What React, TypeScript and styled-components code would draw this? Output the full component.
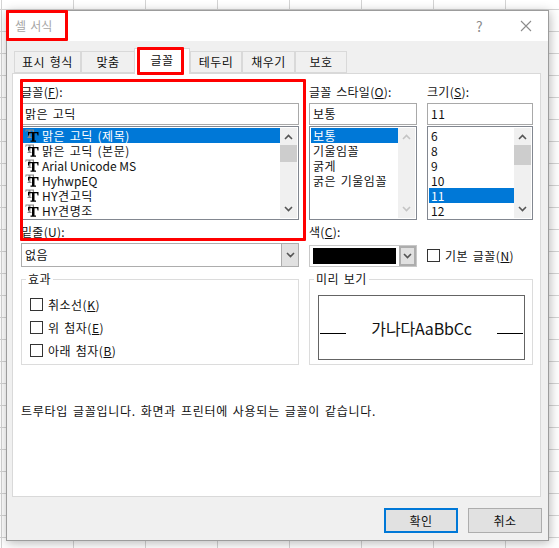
import styled, { createGlobalStyle } from 'styled-components'
import { ReactNode } from 'react'

const GlobalStyle = createGlobalStyle`
  html, body {
    margin: 0;
    padding: 0;
    background: #fff;
    font: 12px/16px 'Noto Sans CJK KR', 'Noto Sans', sans-serif;
    letter-spacing: 0.5px;
    word-spacing: 1.5px;
    color: #111;
  }
`

const fontRows = ['맑은 고딕 (제목)', '맑은 고딕 (본문)', 'Arial Unicode MS', 'HyhwpEQ', 'HY견고딕', 'HY견명조']
const styleRows = ['보통', '기울임꼴', '굵게', '굵은 기울임꼴']
const sizeRows = ['6', '8', '9', '10', '11', '12']
const tabs = [
  { label: '표시 형식', width: 67 },
  { label: '맞춤', width: 54 },
  { label: '글꼴', width: 56, active: true },
  { label: '테두리', width: 52 },
  { label: '채우기', width: 53 },
  { label: '보호', width: 52 },
]

const Chevron = ({ up, faded }: { up?: boolean; faded?: boolean }) => (
  <svg width="9" height="6" viewBox="0 0 9 6">
    <path
      d={up ? 'M1 5 L4.5 1.5 L8 5' : 'M1 1 L4.5 4.5 L8 1'}
      fill="none"
      stroke={faded ? '#c4c4c4' : '#555'}
      strokeWidth="1.6"
    />
  </svg>
)

const FontIcon = () => (
  <svg width="14" height="13" viewBox="0 0 14 13">
    <path d="M0.5 0.5 H9 V3 H8 L7.5 1.5 H5.5 V8 H6.5 V9 H2.5 V8 H3.5 V1.5 H1.5 L1 3 H0.5 Z" fill="#8a8a8a" />
    <path d="M3 3 H13.5 V6.5 H12.6 L12 4.3 H9.5 V11.5 H11 V12.7 H5.5 V11.5 H7 V4.3 H4.5 L3.9 6.5 H3 Z" fill="#000" />
  </svg>
)

const Scrollbar = ({ thumb, faded }: { thumb?: number; faded?: boolean }) => (
  <ScrollTrack>
    <Chevron up faded={faded} />
    {thumb ? <ScrollThumb $height={thumb} /> : null}
    <ScrollGap />
    <Chevron faded={faded} />
  </ScrollTrack>
)

const ListBox = ({
  rows,
  selected,
  thumb,
  faded,
  withIcon,
}: {
  rows: string[]
  selected: number
  thumb?: number
  faded?: boolean
  withIcon?: boolean
}) => (
  <ListFrame>
    <ListRows>
      {rows.map((row, i) => (
        <ListRow key={row} $selected={i === selected} $latin={/^[\x00-\x7f]+$/.test(row)}>
          {withIcon && <FontIcon />}
          <span>{row}</span>
        </ListRow>
      ))}
    </ListRows>
    <Scrollbar thumb={thumb} faded={faded} />
  </ListFrame>
)

const Check = ({ children }: { children: ReactNode }) => (
  <CheckRow>
    <CheckBox />
    <span>{children}</span>
  </CheckRow>
)

export default function App() {
  return (
    <Page>
      <GlobalStyle />
      <Dialog>
        <TitleBar>
          <Title>셀 서식</Title>
          <HelpMark>?</HelpMark>
          <svg width="12" height="12" viewBox="0 0 12 12">
            <path d="M1 1 L11 11 M11 1 L1 11" stroke="#8c8c8c" strokeWidth="1.1" fill="none" />
          </svg>
        </TitleBar>
        <TabStrip>
          {tabs.map((tab) => (
            <Tab key={tab.label} $active={tab.active} $width={tab.width}>
              {tab.label}
            </Tab>
          ))}
        </TabStrip>
        <Panel>
          <Columns>
            <Column>
              <FieldLabel>
                글꼴(<u>F</u>):
              </FieldLabel>
              <TextBox>맑은 고딕</TextBox>
              <ListBox rows={fontRows} selected={0} thumb={17} withIcon />
            </Column>
            <Column>
              <FieldLabel>
                글꼴 스타일(<u>O</u>):
              </FieldLabel>
              <TextBox>보통</TextBox>
              <ListBox rows={styleRows} selected={0} faded />
            </Column>
            <Column>
              <FieldLabel>
                크기(<u>S</u>):
              </FieldLabel>
              <TextBox>11</TextBox>
              <ListBox rows={sizeRows} selected={4} thumb={20} />
            </Column>
          </Columns>
          <Columns>
            <Column>
              <SubLabel>
                밑줄(<u>U</u>):
              </SubLabel>
              <Combo>
                <ComboValue>없음</ComboValue>
                <ComboButton>
                  <Chevron />
                </ComboButton>
              </Combo>
            </Column>
            <Column>
              <SubLabel>
                색(<u>C</u>):
              </SubLabel>
              <ColorCombo>
                <ColorSwatch />
                <ColorButton>
                  <Chevron />
                </ColorButton>
              </ColorCombo>
            </Column>
            <DefaultFont>
              <Check>
                기본 글꼴(<u>N</u>)
              </Check>
            </DefaultFont>
          </Columns>
          <Groups>
            <Group>
              <Legend>효과</Legend>
              <Check>
                취소선(<u>K</u>)
              </Check>
              <Check>
                위 첨자(<u>E</u>)
              </Check>
              <Check>
                아래 첨자(<u>B</u>)
              </Check>
            </Group>
            <Group>
              <Legend>미리 보기</Legend>
              <Preview>
                <PreviewRule />
                <PreviewText>가나다AaBbCc</PreviewText>
                <PreviewRule />
              </Preview>
            </Group>
          </Groups>
          <InfoText>트루타입 글꼴입니다. 화면과 프린터에 사용되는 글꼴이 같습니다.</InfoText>
        </Panel>
        <Footer>
          <FooterButton $primary>확인</FooterButton>
          <FooterButton>취소</FooterButton>
        </Footer>
        <RedMark $left={-1} $top={-1} $width={62} $height={31} />
        <RedMark $left={130} $top={36} $width={47} $height={28} />
        <RedMark $left={13} $top={68} $width={286} $height={162} />
      </Dialog>
    </Page>
  )
}

const Page = styled.div`
  width: 559px;
  height: 548px;
  overflow: hidden;
  padding: 10px 0 0 6px;
  box-sizing: border-box;
  background-color: #fff;
  background-image:
    repeating-linear-gradient(90deg, #d4d4d4 0 1px, transparent 1px 72px),
    repeating-linear-gradient(180deg, #d4d4d4 0 1px, transparent 1px 22px);
  background-position: 1px 0, 0 9px;
`

const Dialog = styled.div`
  position: relative;
  width: 543px;
  height: 531px;
  box-sizing: border-box;
  border: 1px solid #9c9c9c;
  background: #f0f0f0;
  box-shadow: 1px 2px 10px rgba(0, 0, 0, 0.28);
`

const TitleBar = styled.div`
  height: 30px;
  display: flex;
  align-items: center;
  padding: 0 16px 0 8px;
  background: #fff;
`

const Title = styled.div`
  flex: 1;
  color: #a6a6a6;
  letter-spacing: 0;
`

const HelpMark = styled.div`
  width: 44px;
  color: #8c8c8c;
  font-size: 14px;
`

const TabStrip = styled.div`
  display: flex;
  align-items: flex-end;
  height: 32px;
  padding-left: 7px;
`

const Tab = styled.div<{ $active?: boolean; $width: number }>`
  width: ${(p) => p.$width}px;
  height: ${(p) => (p.$active ? 26 : 22)}px;
  box-sizing: border-box;
  margin-left: ${(p) => (p.$active ? -1 : 0)}px;
  margin-bottom: ${(p) => (p.$active ? -1 : 0)}px;
  padding-bottom: ${(p) => (p.$active ? 3 : 0)}px;
  display: flex;
  align-items: center;
  justify-content: center;
  border: 1px solid #d9d9d9;
  border-bottom: ${(p) => (p.$active ? 'none' : '1px solid #d9d9d9')};
  background: ${(p) => (p.$active ? '#fff' : '#f0f0f0')};
  position: relative;
  z-index: ${(p) => (p.$active ? 1 : 0)};
`

const Panel = styled.div`
  width: 529px;
  height: 424px;
  margin-left: 5px;
  box-sizing: border-box;
  border: 1px solid #d9d9d9;
  background: #fff;
  padding: 9px 0 0 8px;
`

const Columns = styled.div`
  display: grid;
  grid-template-columns: 278px 108px 106px;
  column-gap: 10px;
`

const Column = styled.div`
  display: flex;
  flex-direction: column;
  min-width: 0;
`

const FieldLabel = styled.div`
  height: 20px;
  line-height: 18px;
  letter-spacing: 0.3px;
`

const SubLabel = styled.div`
  height: 23px;
  line-height: 24px;
  letter-spacing: 0.3px;
`

const TextBox = styled.div`
  height: 22px;
  box-sizing: border-box;
  border: 1px solid #a9a9a9;
  padding: 0 3px;
  line-height: 20px;
  margin-bottom: 1px;
`

const ListFrame = styled.div`
  height: 94px;
  box-sizing: border-box;
  border: 1px solid #828790;
  padding: 1px;
  display: flex;
  overflow: hidden;
`

const ListRows = styled.div`
  flex: 1;
  min-width: 0;
`

const ListRow = styled.div<{ $selected?: boolean; $latin?: boolean }>`
  height: 15px;
  display: flex;
  align-items: center;
  gap: 3px;
  padding-left: 2px;
  line-height: 15px;
  white-space: nowrap;
  letter-spacing: ${(p) => (p.$latin ? 0 : 0.5)}px;
  word-spacing: ${(p) => (p.$latin ? 0 : 1.5)}px;
  background: ${(p) => (p.$selected ? '#0078d7' : 'transparent')};
  color: ${(p) => (p.$selected ? '#fff' : '#111')};
`

const ScrollTrack = styled.div`
  width: 17px;
  flex: none;
  background: #f0f0f0;
  display: flex;
  flex-direction: column;
  align-items: center;
  padding: 6px 0;
  box-sizing: border-box;
`

const ScrollThumb = styled.div<{ $height: number }>`
  width: 100%;
  height: ${(p) => p.$height}px;
  margin-top: 5px;
  background: #cdcdcd;
`

const ScrollGap = styled.div`
  flex: 1;
`

const Combo = styled.div`
  height: 24px;
  box-sizing: border-box;
  border: 1px solid #adadad;
  display: flex;
  align-items: stretch;
`

const ColorCombo = styled(Combo)`
  height: 22px;
  margin-top: 2px;
  border-color: #c8c8c8;
`

const ComboValue = styled.div`
  flex: 1;
  padding: 0 3px;
  line-height: 22px;
`

const ComboButton = styled.div`
  width: 16px;
  flex: none;
  border-left: 1px solid #adadad;
  background: #e1e1e1;
  display: flex;
  align-items: center;
  justify-content: center;
`

const ColorButton = styled(ComboButton)`
  width: 17px;
  box-sizing: border-box;
  border: 2px solid #adadad;
`

const ColorSwatch = styled.div`
  flex: 1;
  margin: 2px 3px;
  background: #000;
`

const DefaultFont = styled.div`
  padding-top: 24px;
`

const CheckRow = styled.div`
  height: 23px;
  display: flex;
  align-items: center;
  gap: 5px;
  white-space: nowrap;
`

const CheckBox = styled.div`
  width: 13px;
  height: 13px;
  box-sizing: border-box;
  border: 1px solid #333;
  background: #fff;
  flex: none;
`

const Groups = styled.div`
  display: grid;
  grid-template-columns: 278px 224px;
  column-gap: 10px;
  margin-top: 12px;
`

const Group = styled.div`
  position: relative;
  height: 86px;
  box-sizing: border-box;
  border: 1px solid #dcdcdc;
  padding: 13px 8px 0;
`

const Legend = styled.div`
  position: absolute;
  top: -9px;
  left: 4px;
  padding: 0 2px;
  background: #fff;
`

const Preview = styled.div`
  margin-top: 2px;
  width: 207px;
  height: 65px;
  box-sizing: border-box;
  border: 1px solid #646464;
  display: flex;
  align-items: center;
  justify-content: space-between;
  padding: 0 1px;
`

const PreviewRule = styled.div`
  width: 26px;
  height: 1px;
  margin-top: 11px;
  background: #000;
`

const PreviewText = styled.div`
  font-size: 16px;
  line-height: 20px;
  letter-spacing: -0.2px;
`

const InfoText = styled.div`
  margin-top: 37px;
  line-height: 18px;
  letter-spacing: 0.72px;
`

const Footer = styled.div`
  display: flex;
  justify-content: flex-end;
  gap: 10px;
  padding: 11px 6px 0 0;
`

const FooterButton = styled.div<{ $primary?: boolean }>`
  width: 74px;
  height: 25px;
  box-sizing: border-box;
  border: ${(p) => (p.$primary ? '2px solid #0078d7' : '1px solid #adadad')};
  background: #e1e1e1;
  display: flex;
  align-items: center;
  justify-content: center;
`

const RedMark = styled.div<{ $left: number; $top: number; $width: number; $height: number }>`
  position: absolute;
  z-index: 2;
  left: ${(p) => p.$left}px;
  top: ${(p) => p.$top}px;
  width: ${(p) => p.$width}px;
  height: ${(p) => p.$height}px;
  box-sizing: border-box;
  border: 3px solid #f00;
  border-radius: 1px;
  pointer-events: none;
`
